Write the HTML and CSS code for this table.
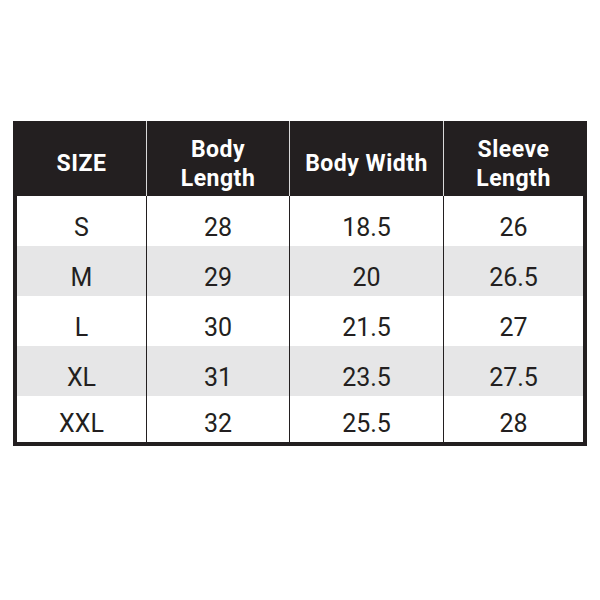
FILE: index.html
```html
<!DOCTYPE html>
<html>
<head>
<meta charset="utf-8">
<link rel="stylesheet" href="styles.css">
</head>
<body>
<div class="page">
  <div class="chart">
    <div class="row head">
      <div class="cell">SIZE</div>
      <div class="cell">Body<br>Length</div>
      <div class="cell">Body Width</div>
      <div class="cell">Sleeve<br>Length</div>
    </div>
    <div class="row">
      <div class="cell">S</div><div class="cell">28</div><div class="cell">18.5</div><div class="cell">26</div>
    </div>
    <div class="row alt">
      <div class="cell">M</div><div class="cell">29</div><div class="cell">20</div><div class="cell">26.5</div>
    </div>
    <div class="row">
      <div class="cell">L</div><div class="cell">30</div><div class="cell">21.5</div><div class="cell">27</div>
    </div>
    <div class="row alt">
      <div class="cell">XL</div><div class="cell">31</div><div class="cell">23.5</div><div class="cell">27.5</div>
    </div>
    <div class="row last">
      <div class="cell">XXL</div><div class="cell">32</div><div class="cell">25.5</div><div class="cell">28</div>
    </div>
  </div>
</div>
</body>
</html>
```
FILE: styles.css
```css
html, body {
  margin: 0;
  padding: 0;
  background: #ffffff;
}
.page {
  padding: 121px 0 0 13px;
}
.chart {
  width: 574px;
  border: 4px solid #231f20;
  border-top: 0;
  box-sizing: border-box;
  font-family: Roboto, "Liberation Sans", sans-serif;
  color: #231f20;
}
.row {
  display: grid;
  grid-template-columns: 129px 143px 154px 140px;
  height: 50px;
  background: #ffffff;
}
.row.alt {
  background: #e6e6e7;
}
.row.last {
  height: 46px;
}
.cell {
  display: flex;
  align-items: center;
  justify-content: center;
  text-align: center;
  font-size: 25px;
  padding-top: 12px;
  box-sizing: border-box;
  border-left: 1px solid #231f20;
}
.row.last .cell {
  padding-top: 8px;
}
.cell:first-child {
  border-left: 0;
}
.row.head {
  height: 75px;
  background: #231f20;
  color: #ffffff;
  margin: 0 -4px 0 -4px;
  padding: 0 4px;
  grid-template-columns: 129px 143px 154px 140px;
}
.row.head .cell {
  font-size: 23px;
  letter-spacing: 0.5px;
  font-weight: 700;
  line-height: 29px;
  padding-top: 10px;
  border-left-color: #d9d9d9;
}
.row.head .cell:first-child {
  border-left: 0;
}
```
